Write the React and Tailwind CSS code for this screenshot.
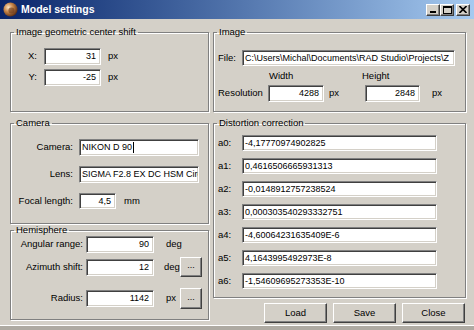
import React from 'react'

const edit =
  'shrink-0 bg-white border border-t-[#808080] border-l-[#808080] border-r-white border-b-white shadow-[inset_1px_1px_0_#404040,inset_-1px_-1px_0_#d4d0c8] overflow-hidden whitespace-nowrap flex items-center'

const raised =
  'shrink-0 bg-[#d4d0c8] border border-t-white border-l-white border-r-[#404040] border-b-[#404040] shadow-[inset_-1px_-1px_0_#808080] flex items-center justify-center'

function Group({ title, className, children }) {
  return (
    <fieldset
      className={
        'border border-[#808080] shadow-[inset_1px_1px_0_#fff,1px_1px_0_#fff] min-w-0 ' +
        className
      }
    >
      <legend className="ml-[3px] px-[2px] leading-[12px]">{title}</legend>
      {children}
    </fieldset>
  )
}

function Edit({ value, className, right, caret }) {
  return (
    <div className={edit + ' ' + (right ? 'justify-end pr-[4px] ' : 'pl-[2px] ') + className}>
      <span className="text-[9px] leading-none">{value}</span>
      {caret && <span className="w-px h-[11px] bg-black ml-px" />}
    </div>
  )
}

function Button({ children, className }) {
  return <div className={raised + ' ' + className}>{children}</div>
}

function TitleBar() {
  return (
    <div className="h-[19px] flex items-center bg-linear-to-r from-[#0a246a] to-[#a6caf0] pl-[3px] pr-[4px]">
      <svg width="15" height="15" viewBox="0 0 16 16">
        <defs>
          <radialGradient id="lens" cx="0.35" cy="0.35" r="0.7">
            <stop offset="0" stopColor="#fbe3c4" />
            <stop offset="0.45" stopColor="#c9874a" />
            <stop offset="1" stopColor="#5a2c12" />
          </radialGradient>
        </defs>
        <circle cx="8" cy="8" r="7.5" fill="url(#lens)" />
        <circle cx="9" cy="9" r="3.2" fill="#6b3a1c" opacity="0.6" />
      </svg>
      <span className="ml-[3px] text-white font-bold text-[10.5px]">Model settings</span>
      <div className="ml-auto flex items-center">
        <Button className="w-[14px] h-[12px]">
          <svg width="8" height="7" viewBox="0 0 8 7">
            <rect x="1" y="5" width="6" height="2" fill="#000" />
          </svg>
        </Button>
        <Button className="w-[14px] h-[12px]">
          <svg width="9" height="8" viewBox="0 0 9 8">
            <rect x="0.5" y="0.5" width="8" height="7" fill="none" stroke="#000" />
            <rect x="0" y="0" width="9" height="2" fill="#000" />
          </svg>
        </Button>
        <Button className="w-[14px] h-[12px] ml-[2px]">
          <svg width="8" height="7" viewBox="0 0 8 7">
            <path d="M0.5 0 L7.5 7 M7.5 0 L0.5 7" stroke="#000" strokeWidth="1.6" />
          </svg>
        </Button>
      </div>
    </div>
  )
}

export default function App() {
  const coeffs = [
    '-4,17770974902825',
    '0,4616506665931313',
    '-0,0148912757238524',
    '0,000303540293332751',
    '-4,60064231635409E-6',
    '4,1643995492973E-8',
    '-1,54609695273353E-10',
  ]

  return (
    <div className="w-[474px] h-[330px] bg-[#d4d0c8] flex flex-col overflow-hidden whitespace-nowrap text-black text-[9.5px] font-['Liberation_Sans',Arial,sans-serif]">
      <TitleBar />

      <div className="flex-1 flex gap-[4px] pl-[10px] pt-[7px]">
        {/* left column */}
        <div className="w-[199px] flex flex-col">
          <Group title="Image geometric center shift" className="h-[86px]">
            <div className="flex items-center mt-[10px]">
              <span className="w-[26px] shrink-0 text-right">X:</span>
              <Edit value="31" right className="ml-[7px] w-[57px] h-[17px]" />
              <span className="ml-[7px]">px</span>
            </div>
            <div className="flex items-center mt-[4px]">
              <span className="w-[26px] shrink-0 text-right">Y:</span>
              <Edit value="-25" right className="ml-[7px] w-[57px] h-[17px]" />
              <span className="ml-[7px]">px</span>
            </div>
          </Group>

          <Group title="Camera" className="h-[107px] mt-[5px]">
            <div className="flex items-center mt-[10px]">
              <span className="w-[62px] shrink-0 text-right">Camera:</span>
              <Edit value="NIKON D 90" caret className="ml-[6px] w-[120px] h-[17px]" />
            </div>
            <div className="flex items-center mt-[10px]">
              <span className="w-[62px] shrink-0 text-right">Lens:</span>
              <Edit value="SIGMA F2.8 EX DC HSM Circular Fisheye" className="ml-[6px] w-[120px] h-[17px]" />
            </div>
            <div className="flex items-center mt-[10px]">
              <span className="w-[62px] shrink-0 text-right">Focal length:</span>
              <Edit value="4,5" right className="ml-[6px] w-[37px] h-[16px]" />
              <span className="ml-[8px]">mm</span>
            </div>
          </Group>

          <Group title="Hemisphere" className="h-[96px]">
            <div className="flex items-center">
              <span className="w-[72px] shrink-0 text-right">Angular range:</span>
              <Edit value="90" right className="ml-[3px] w-[68px] h-[17px]" />
              <span className="ml-[12px]">deg</span>
            </div>
            <div className="flex items-center mt-[4px]">
              <span className="w-[72px] shrink-0 text-right">Azimuth shift:</span>
              <Edit value="12" right className="ml-[3px] w-[68px] h-[17px]" />
              <span className="ml-[10px] w-[16px] shrink-0">deg</span>
              <Button className="w-[22px] h-[20px] text-[9px] leading-none pb-[3px]">...</Button>
            </div>
            <div className="flex items-center mt-[11px]">
              <span className="w-[72px] shrink-0 text-right">Radius:</span>
              <Edit value="1142" right className="ml-[3px] w-[68px] h-[17px]" />
              <span className="ml-[10px] w-[16px] shrink-0 pl-[2px]">px</span>
              <Button className="w-[22px] h-[21px] text-[9px] leading-none pb-[3px]">...</Button>
            </div>
          </Group>
        </div>

        {/* right column */}
        <div className="w-[253px] flex flex-col">
          <Group title="Image" className="h-[86px]">
            <div className="flex items-center mt-[12px] pl-[4px]">
              <span className="w-[24px] shrink-0">File:</span>
              <Edit
                value="C:\Users\Michal\Documents\RAD Studio\Projects\Z"
                className="w-[213px] h-[16px]"
              />
            </div>
            <div className="flex mt-[3px] pl-[55px] leading-[14px]">
              <span className="w-[93px] shrink-0">Width</span>
              <span>Height</span>
            </div>
            <div className="flex items-center mt-[2px] pl-[4px]">
              <span className="w-[50px] shrink-0">Resolution</span>
              <Edit value="4288" right className="w-[56px] h-[17px]" />
              <span className="ml-[5px] w-[36px] shrink-0">px</span>
              <Edit value="2848" right className="w-[55px] h-[17px]" />
              <span className="ml-[12px]">px</span>
            </div>
          </Group>

          <Group title="Distortion correction" className="h-[181px] mt-[5px]">
            <div className="flex flex-col gap-[7px] mt-[6px] pl-[4px]">
              {coeffs.map((c, i) => (
                <div key={i} className="flex items-center">
                  <span className="w-[24px] shrink-0">{`a${i}:`}</span>
                  <Edit value={c} className="w-[195px] h-[16px]" />
                </div>
              ))}
            </div>
          </Group>

          <div className="flex justify-end gap-[6px] mt-[5px] pr-[1px]">
            <Button className="w-[63px] h-[20px]">Load</Button>
            <Button className="w-[63px] h-[20px]">Save</Button>
            <Button className="w-[63px] h-[20px]">Close</Button>
          </div>
        </div>
      </div>

      <div className="h-[5px] bg-[#aeaaa2] border-t border-white" />
    </div>
  )
}
